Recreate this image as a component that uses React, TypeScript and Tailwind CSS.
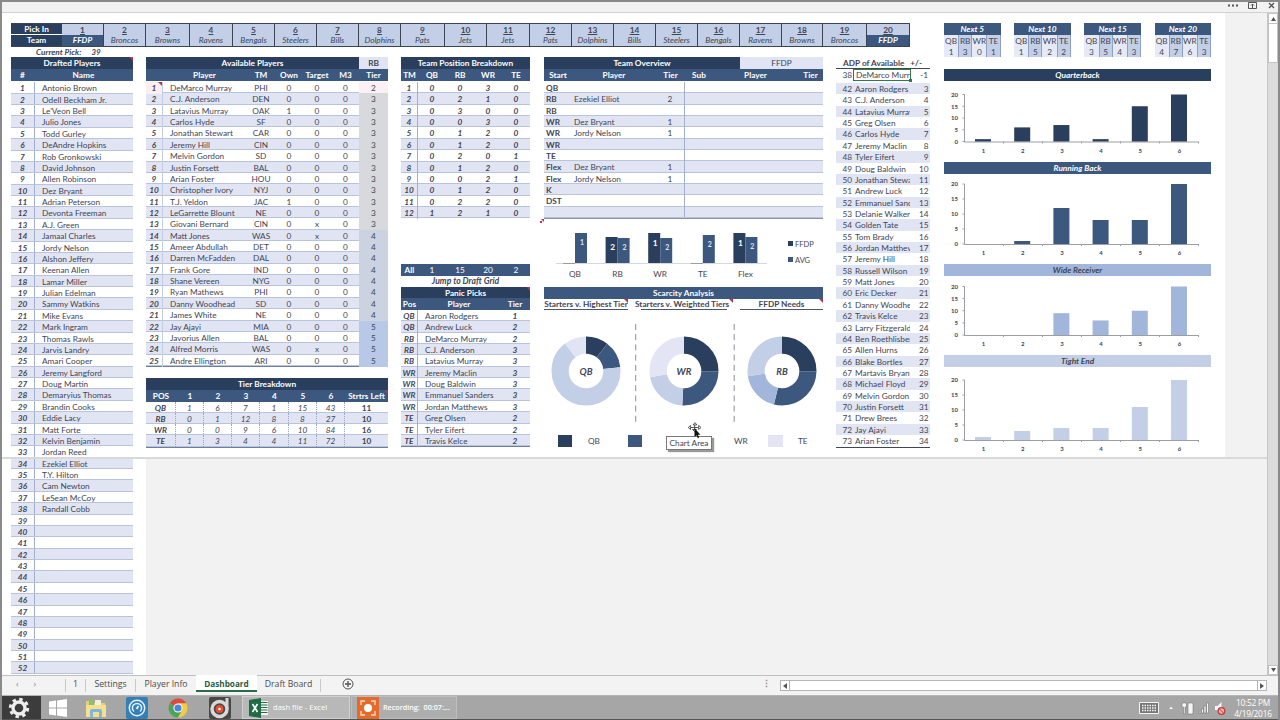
import { Fragment } from 'react'

const picks = [
  ['FFDP', 'w-[42px]'], ['Broncos', 'w-[42px]'], ['Browns', 'w-[44px]'], ['Ravens', 'w-[43px]'],
  ['Bengals', 'w-[42px]'], ['Steelers', 'w-[42px]'], ['Bills', 'w-[42px]'], ['Dolphins', 'w-[42px]'],
  ['Pats', 'w-[44px]'], ['Jets', 'w-[42px]'], ['Jets', 'w-[43px]'], ['Pats', 'w-[42px]'],
  ['Dolphins', 'w-[42px]'], ['Bills', 'w-[42px]'], ['Steelers', 'w-[42px]'], ['Bengals', 'w-[42px]'],
  ['Ravens', 'w-[42px]'], ['Browns', 'w-[41px]'], ['Broncos', 'w-[44px]'], ['FFDP', 'w-[43px]'],
]

const next = [
  { title: 'Next 5', values: [1, 3, 0, 1] },
  { title: 'Next 10', values: [1, 5, 2, 2] },
  { title: 'Next 15', values: [3, 5, 4, 3] },
  { title: 'Next 20', values: [4, 7, 6, 3] },
]

const drafted = [
  'Antonio Brown', 'Odell Beckham Jr.', "Le'Veon Bell", 'Julio Jones', 'Todd Gurley', 'DeAndre Hopkins',
  'Rob Gronkowski', 'David Johnson', 'Allen Robinson', 'Dez Bryant', 'Adrian Peterson', 'Devonta Freeman',
  'A.J. Green', 'Jamaal Charles', 'Jordy Nelson', 'Alshon Jeffery', 'Keenan Allen', 'Lamar Miller',
  'Julian Edelman', 'Sammy Watkins', 'Mike Evans', 'Mark Ingram', 'Thomas Rawls', 'Jarvis Landry',
  'Amari Cooper', 'Jeremy Langford', 'Doug Martin', 'Demaryius Thomas', 'Brandin Cooks', 'Eddie Lacy',
  'Matt Forte', 'Kelvin Benjamin', 'Jordan Reed', 'Ezekiel Elliot', 'T.Y. Hilton', 'Cam Newton',
  'LeSean McCoy', 'Randall Cobb',
]

const available: [string, string, string, string, number][] = [
  ['DeMarco Murray', 'PHI', '0', '0', 2],
  ['C.J. Anderson', 'DEN', '0', '0', 3],
  ['Latavius Murray', 'OAK', '1', '0', 3],
  ['Carlos Hyde', 'SF', '0', '0', 3],
  ['Jonathan Stewart', 'CAR', '0', '0', 3],
  ['Jeremy Hill', 'CIN', '0', '0', 3],
  ['Melvin Gordon', 'SD', '0', '0', 3],
  ['Justin Forsett', 'BAL', '0', '0', 3],
  ['Arian Foster', 'HOU', '0', '0', 3],
  ['Christopher Ivory', 'NYJ', '0', '0', 3],
  ['T.J. Yeldon', 'JAC', '1', '0', 3],
  ['LeGarrette Blount', 'NE', '0', '0', 3],
  ['Giovani Bernard', 'CIN', '0', 'x', 3],
  ['Matt Jones', 'WAS', '0', 'x', 4],
  ['Ameer Abdullah', 'DET', '0', '0', 4],
  ['Darren McFadden', 'DAL', '0', '0', 4],
  ['Frank Gore', 'IND', '0', '0', 4],
  ['Shane Vereen', 'NYG', '0', '0', 4],
  ['Ryan Mathews', 'PHI', '0', '0', 4],
  ['Danny Woodhead', 'SD', '0', '0', 4],
  ['James White', 'NE', '0', '0', 4],
  ['Jay Ajayi', 'MIA', '0', '0', 5],
  ['Javorius Allen', 'BAL', '0', '0', 5],
  ['Alfred Morris', 'WAS', '0', 'x', 5],
  ['Andre Ellington', 'ARI', '0', '0', 5],
]

const tierColor: Record<number, string> = {
  2: 'bg-[#fbf1f4]',
  3: 'bg-[#d8d9dc]',
  4: 'bg-[#cbd3e1]',
  5: 'bg-[#b7c9e6]',
}

const breakdown: [string, number[], number][] = [
  ['QB', [1, 6, 7, 1, 15, 43], 11],
  ['RB', [0, 1, 12, 8, 8, 27], 10],
  ['WR', [0, 0, 9, 6, 10, 84], 16],
  ['TE', [1, 3, 4, 4, 11, 72], 10],
]

const teamPositions = [
  [0, 0, 3, 0], [0, 2, 1, 0], [0, 3, 0, 0], [0, 0, 3, 0], [0, 1, 2, 0], [0, 1, 2, 0],
  [0, 2, 0, 1], [0, 1, 2, 0], [0, 0, 2, 1], [0, 1, 2, 0], [0, 2, 2, 0], [1, 2, 1, 0],
]

const panic = [
  ['QB', 'Aaron Rodgers', '1'], ['QB', 'Andrew Luck', '2'], ['RB', 'DeMarco Murray', '2'],
  ['RB', 'C.J. Anderson', '3'], ['RB', 'Latavius Murray', '3'], ['WR', 'Jeremy Maclin', '3'],
  ['WR', 'Doug Baldwin', '3'], ['WR', 'Emmanuel Sanders', '3'], ['WR', 'Jordan Matthews', '3'],
  ['TE', 'Greg Olsen', '2'], ['TE', 'Tyler Eifert', '2'], ['TE', 'Travis Kelce', '2'],
]

const overview = [
  ['QB', '', ''], ['RB', 'Ezekiel Elliot', '2'], ['RB', '', ''], ['WR', 'Dez Bryant', '1'],
  ['WR', 'Jordy Nelson', '1'], ['WR', '', ''], ['TE', '', ''], ['Flex', 'Dez Bryant', '1'],
  ['Flex', 'Jordy Nelson', '1'], ['K', '', ''], ['DST', '', ''], ['', '', ''],
]

const adp = [
  'Aaron Rodgers', 'C.J. Anderson', 'Latavius Murray', 'Greg Olsen', 'Carlos Hyde', 'Jeremy Maclin',
  'Tyler Eifert', 'Doug Baldwin', 'Jonathan Stewart', 'Andrew Luck', 'Emmanuel Sanders', 'Delanie Walker',
  'Golden Tate', 'Tom Brady', 'Jordan Matthews', 'Jeremy Hill', 'Russell Wilson', 'Matt Jones',
  'Eric Decker', 'Danny Woodhead', 'Travis Kelce', 'Larry Fitzgerald', 'Ben Roethlisberger', 'Allen Hurns',
  'Blake Bortles', 'Martavis Bryant', 'Michael Floyd', 'Melvin Gordon', 'Justin Forsett', 'Drew Brees',
  'Jay Ajayi', 'Arian Foster',
]

const stripe = (i: number) => (i % 2 ? 'bg-[#e1e5f3]' : 'bg-white')

function Note() {
  return <span className="absolute top-0 right-0 size-[4px] bg-[#c0304a] [clip-path:polygon(0_0,100%_0,100%_100%)]" />
}

function PickStrip() {
  return (
    <div className="w-[899px] shrink-0">
      <div className="flex h-[24px] border-y border-[#3b4453]">
        <div className="w-[51px] bg-[#2a3f5d] text-center font-bold text-white">
          <div className="h-[11px] border-b border-white leading-[11px]">Pick In</div>
          <div className="h-[11px] leading-[11px]">Team</div>
        </div>
        {picks.map(([team, width], i) => (
          <div key={i} className={`${width} border-r border-[#3b4453] bg-[#c2cfe7] text-center`}>
            <div className="h-[11px] font-bold leading-[12px] underline">{i + 1}</div>
            <div className={`h-[11px] leading-[11px] italic ${team === 'FFDP' ? 'bg-[#3d587e] font-bold text-white' : ''}`}>{team}</div>
          </div>
        ))}
      </div>
      <div className="flex h-[10px] gap-[10px] pl-[25px] font-bold leading-[11px] italic">
        <span>Current Pick:</span>
        <span>39</span>
      </div>
    </div>
  )
}

function NextPicks() {
  return (
    <div className="flex h-[34px] gap-[13.6px]">
      {next.map((n) => (
        <div key={n.title} className="w-[56.6px]">
          <div className="h-[12px] bg-[#3d587e] text-center font-bold leading-[13px] text-white italic">{n.title}</div>
          <div className="grid h-[22px] grid-cols-4 text-center">
            {['QB', 'RB', 'WR', 'TE'].map((pos, i) => (
              <div key={pos} className={i % 2 ? 'border-x border-[#8ea1c4] bg-[#c2cfe7]' : 'bg-[#e6eaf6]'}>
                <div className="flex h-[11px] justify-center leading-[12px]">{pos}</div>
                <div className="h-[11px] leading-[12px]">{n.values[i]}</div>
              </div>
            ))}
          </div>
        </div>
      ))}
    </div>
  )
}

function DraftedPlayers() {
  return (
    <div className="ml-[9px] w-[122px]">
      <div className="relative h-[12px] bg-[#2a3f5d] text-center font-bold leading-[13px] text-white">
        Drafted Players
        <Note />
      </div>
      <div className="mb-[1.3px] grid h-[12px] grid-cols-[23px_99px] bg-[#3d587e] text-center font-bold leading-[13px] text-white">
        <span>#</span>
        <span>Name</span>
      </div>
      {Array.from({ length: 52 }, (_, i) => (
        <div key={i} className={`flex h-[11.385px] border-b border-[#b9c3dc] leading-[12px] ${stripe(i)}`}>
          <div className="w-[24px] border-r border-[#a3b0cd] text-center font-bold italic">{i + 1}</div>
          <div className="pl-[7px]">{drafted[i]}</div>
        </div>
      ))}
    </div>
  )
}

function AvailablePlayers() {
  return (
    <div className="w-[242px]">
      <div className="flex h-[12px] text-center font-bold leading-[13px]">
        <div className="w-[213px] bg-[#2a3f5d] text-white">Available Players</div>
        <div className="w-[29px] bg-[#e1e5f3]">RB</div>
      </div>
      <div className="mb-px grid h-[12px] grid-cols-[17px_83px_30px_26px_30px_27px_29px] bg-[#3d587e] text-center font-bold leading-[13px] text-white">
        <span />
        {['Player', 'TM', 'Own', 'Target', 'M3', 'Tier'].map((h) => <span key={h}>{h}</span>)}
      </div>
      <div className="border-b border-[#6d7f9f]">
        {available.map(([name, tm, own, target, tier], i) => (
          <div key={name} className={`grid h-[11.37px] grid-cols-[17px_83px_30px_26px_30px_27px_29px] border-b border-[#b9c3dc] text-center leading-[12px] ${stripe(i)}`}>
            <span className={`relative border-r border-[#c5cde2] font-bold italic ${i ? '' : 'bg-[#fbeef2]'}`}>
              {i + 1}
              {i === 0 && <Note />}
            </span>
            <span className="pl-[7px] text-left">{name}</span>
            <span>{tm}</span>
            <span>{own}</span>
            <span>{target}</span>
            <span>0</span>
            <span className={tierColor[tier]}>{tier}</span>
          </div>
        ))}
      </div>
    </div>
  )
}

function TierBreakdown() {
  return (
    <div className="mt-[10.6px] w-[242px]">
      <div className="h-[12px] bg-[#2a3f5d] text-center font-bold leading-[13px] text-white">Tier Breakdown</div>
      <div className="relative grid h-[12px] grid-cols-[30px_28px_28px_28px_29px_28px_28px_43px] bg-[#3d587e] text-center font-bold leading-[13px] text-white">
        {['POS', '1', '2', '3', '4', '5', '6'].map((h) => <span key={h}>{h}</span>)}
        <span className="whitespace-nowrap">Strtrs Left</span>
        <Note />
      </div>
      <div className="border-b border-[#6d7f9f]">
        {breakdown.map(([pos, values, left], i) => (
          <div key={pos} className={`grid h-[11.3px] grid-cols-[30px_28px_28px_28px_29px_28px_28px_43px] border-b border-[#b9c3dc] text-center leading-[12px] ${stripe(i)}`}>
            <span className="border-r border-dotted border-[#9aa7c2] font-bold italic">{pos}</span>
            {values.map((v, j) => <span key={j} className="border-r border-dotted border-[#9aa7c2] italic">{v}</span>)}
            <span className="font-bold">{left}</span>
          </div>
        ))}
      </div>
    </div>
  )
}

function TeamPositions() {
  return (
    <div className="w-[129px]">
      <div className="h-[12px] bg-[#2a3f5d] text-center font-bold leading-[13px] text-white">Team Position Breakdown</div>
      <div className="mb-px grid h-[12px] grid-cols-[17px_repeat(4,28px)] bg-[#3d587e] text-center font-bold leading-[13px] text-white">
        {['TM', 'QB', 'RB', 'WR', 'TE'].map((h) => <span key={h}>{h}</span>)}
      </div>
      {teamPositions.map((row, i) => (
        <div key={i} className={`grid h-[11.37px] grid-cols-[17px_repeat(4,28px)] border-b border-[#b9c3dc] text-center font-bold leading-[12px] italic ${stripe(i)}`}>
          <span className="border-r border-[#a3b0cd]">{i + 1}</span>
          {row.map((v, j) => <span key={j}>{v}</span>)}
        </div>
      ))}
      <div className="mt-[45.5px] grid h-[12px] grid-cols-[17px_repeat(4,28px)] bg-[#3d587e] text-center leading-[12px] text-white">
        <span className="font-bold">All</span>
        <span>1</span>
        <span>15</span>
        <span>20</span>
        <span>2</span>
      </div>
      <div className="h-[11px] text-center text-[8.6px] font-bold leading-[11px] italic">Jump to Draft Grid</div>
    </div>
  )
}

function PanicPicks() {
  return (
    <div className="w-[129px]">
      <div className="relative h-[11px] bg-[#2a3f5d] text-center font-bold leading-[12px] text-white">
        Panic Picks
        <Note />
      </div>
      <div className="grid h-[12px] grid-cols-[17px_82px_30px] bg-[#3d587e] text-center font-bold leading-[12px] text-white">
        <span>Pos</span>
        <span>Player</span>
        <span>Tier</span>
      </div>
      <div className="border-b border-[#6d7f9f]">
        {panic.map(([pos, name, tier], i) => (
          <div key={name} className={`grid h-[11.38px] grid-cols-[17px_82px_30px] border-b border-[#b9c3dc] leading-[12px] ${stripe(i)}`}>
            <span className="border-r border-[#a3b0cd] text-center font-bold italic">{pos}</span>
            <span className="pl-[7px]">{name}</span>
            <span className="text-center font-bold italic">{tier}</span>
          </div>
        ))}
      </div>
    </div>
  )
}

function TeamOverview() {
  return (
    <div className="w-[279px]">
      <div className="flex h-[12px] text-center font-bold leading-[13px]">
        <div className="w-[196px] bg-[#2a3f5d] text-white">Team Overview</div>
        <div className="w-[83px] bg-[#e1e5f3] font-normal">FFDP</div>
      </div>
      <div className="mb-px grid h-[12px] grid-cols-[28px_84px_29px_28px_85px_25px] bg-[#3d587e] text-center font-bold leading-[13px] text-white">
        {['Start', 'Player', 'Tier', 'Sub', 'Player', 'Tier'].map((h, i) => <span key={i}>{h}</span>)}
      </div>
      <div className="border-b border-[#8b93a3]">
        {overview.map(([pos, name, tier], i) => (
          <div key={i} className={`grid h-[11.33px] grid-cols-[28px_84px_29px_138px] border-b border-[#b9c3dc] leading-[12px] ${stripe(i)}`}>
            <span className="pl-[2px] font-bold">{pos}</span>
            <span className="pl-[2px]">{name}</span>
            <span className="border-r border-[#a3b0cd] text-center">{tier}</span>
            <span />
          </div>
        ))}
      </div>
    </div>
  )
}

const groups: [string, number, number, string][] = [
  ['QB', 0, 30, '1'],
  ['RB', 26, 25, '2'],
  ['WR', 30, 25, '2'],
  ['TE', 0, 28, '2'],
  ['Flex', 30, 26, '2'],
]

function TeamChart() {
  return (
    <svg width="283" height="68" className="-ml-1 block" fill="#3f4654">
      <path d="M1 0h3v3zM0 2h2v2H0z" fill="#c0304a" />
      <path d="M16 44.5H227" stroke="#d5d7dc" />
      {groups.map(([label, a, b, avg], i) => {
        const x = 35 + i * 42.6
        return (
          <g key={label} textAnchor="middle">
            {a > 0 ? <rect x={x - 12} y={44 - a} width="12" height={a} fill="#2a3f5d" /> : <rect x={x - 12} y="44" width="12" height="1" fill="#9a9da3" />}
            <rect x={x} y={44 - b} width="12" height={b} fill="#3d587e" />
            {a > 0 && <text x={x - 5} y={57 - a} fontWeight="700" fill="#fff">{a > 28 ? 1 : 2}</text>}
            <text x={x + 7} y={56 - b} fontSize="7" fontWeight="700" fill="#dfe6f2">{avg}</text>
            <text x={x} y="58">{label}</text>
          </g>
        )
      })}
      <rect x="248" y="22" width="5" height="5" fill="#2a3f5d" />
      <text x="255" y="28" fontSize="7.500">FFDP</text>
      <rect x="248" y="38" width="5" height="5" fill="#3d587e" />
      <text x="255" y="44" fontSize="7.500">AVG</text>
    </svg>
  )
}

function Donut({ cx, label, slices }: { cx: number; label: string; slices: [number, string][] }) {
  const r = 25.9
  const c = 2 * Math.PI * r
  let at = 0
  return (
    <g>
      {slices.map(([part, color], i) => {
        const start = at
        at += part
        return (
          <circle
            key={i}
            cx={cx}
            cy="61"
            r={r}
            fill="none"
            stroke={color}
            strokeWidth="17.2"
            strokeDasharray={`${part * c} ${c}`}
            strokeDashoffset={-start * c}
            transform={`rotate(-90 ${cx} 61)`}
          />
        )
      })}
      <text x={cx} y="64.500" fontSize="9.500" fontWeight="700" fontStyle="italic" textAnchor="middle">{label}</text>
    </g>
  )
}

function ScarcityAnalysis() {
  return (
    <div className="relative w-[279px]">
      <div className="h-[12px] bg-[#3d587e] text-center font-bold leading-[13px] text-white">Scarcity Analysis</div>
      <div className="flex h-[11px] justify-between text-center font-bold leading-[11px] whitespace-nowrap">
        <div className="relative flex w-[84px] justify-center border-b border-[#4c566b]">Starters v. Highest Tier<Note /></div>
        <div className="relative flex w-[98px] justify-center">
          <span className="w-[86px] border-b border-[#4c566b] text-center"><span className="-ml-[6px]">Starters v. Weighted Tiers</span></span>
          <Note />
        </div>
        <div className="relative flex w-[83px] justify-center border-b border-[#4c566b]">FFDP Needs<Note /></div>
      </div>
      <svg width="279" height="137" className="block" fill="#3f4654">
        <path d="M91.7 14V112M190.2 14V112" stroke="#8b8e95" strokeDasharray="6 4.2" />
        <Donut cx={42} label="QB" slices={[[0.105, '#2a3f5d'], [0.125, '#3d587e'], [0.66, '#c2cfe7'], [0.11, '#e1e5f3']]} />
        <Donut cx={140} label="WR" slices={[[0.25, '#2a3f5d'], [0.255, '#3d587e'], [0.21, '#c2cfe7'], [0.285, '#e4e5f4']]} />
        <Donut cx={238} label="RB" slices={[[0.25, '#2a3f5d'], [0.285, '#3d587e'], [0.185, '#a1b6da'], [0.28, '#c2cfe7']]} />
        <rect x="14" y="125" width="14" height="12" fill="#2a3f5d" />
        <rect x="84" y="125" width="14" height="12" fill="#3d587e" />
        <rect x="224" y="125" width="15" height="12" fill="#e4e5f4" />
        <text x="44" y="134">QB</text>
        <text x="190" y="134">WR</text>
        <text x="254" y="134">TE</text>
      </svg>
      <div className="absolute top-[149px] left-[122px] h-[14px] w-[46px] border border-[#77797d] bg-white text-center leading-[12px] shadow-[2px_2px_1px_#999]">Chart Area</div>
      <svg className="absolute top-[135px] left-[143px]" width="16" height="17" viewBox="0 0 16 17">
        <g fill="#fff" stroke="#333" strokeWidth=".8">
          <path d="M8 .7l2 2.2H6zM1.2 5.5l2.4-2v4zM14 5.5l-2.4-2v4zM5.5 7.5l2 2 2-2z" />
          <path d="M7.7 3v5M4 5.5h7" />
        </g>
        <path d="M7.500 6v9l2-1.800 1.400 3 1.300-.600-1.400-2.800h2.600z" fill="#111" />
      </svg>
    </div>
  )
}

function AdpList() {
  return (
    <div className="w-[94px]">
      <div className="flex h-[12px] justify-between border-b border-[#3f4654] pr-[8px] pl-[7px] font-bold leading-[12px]">
        <span>ADP of Available</span>
        <span>+/-</span>
      </div>
      <div className="mb-[2px] flex h-[12px] leading-[12px]">
        <span className="w-[17px] pr-px text-right">38</span>
        <span className="relative w-[58px] border border-[#2f7a4d] pl-[2px] leading-[10px]">
          <span className="block overflow-hidden whitespace-nowrap">DeMarco Murr</span>
          <span className="absolute -right-[2px] -bottom-[2px] size-[3px] bg-[#2f7a4d]" />
        </span>
        <span className="w-[17px] text-right">-1</span>
      </div>
      <div className="border-b border-[#3f4654]">
        {adp.map((name, i) => (
          <div key={name} className={`flex h-[11.37px] leading-[12px] ${stripe(i + 1)}`}>
            <span className="w-[16px] text-right">{42 + i}</span>
            <span className="ml-[3px] w-[55px] overflow-hidden whitespace-nowrap">{name}</span>
            <span className="w-[18.500px] text-right">{3 + i}</span>
          </div>
        ))}
      </div>
    </div>
  )
}

type TierChartProps = { title: string; head: string; color: string; values: number[]; height: number; top: number; base: number }

function TierChart({ title, head, color, values, height, top, base }: TierChartProps) {
  const unit = (base - top) / 20
  return (
    <div className="w-[267px]">
      <div className={`h-[12px] text-center font-bold leading-[13px] italic ${head}`}>{title}</div>
      <svg width="267" height={height} className="block" fontSize="6" fontWeight="700" fill="#3f4654">
        <path d={`M20.500 ${top}V${base + 0.5}H254.500`} fill="none" stroke="#9b9ea5" />
        {[0, 5, 10, 15, 20].map((v) => (
          <Fragment key={v}>
            <path d={`M18.500 ${base - v * unit}h2`} stroke="#9b9ea5" />
            <text x="14" y={base - v * unit + 2.3} textAnchor="end">{v}</text>
          </Fragment>
        ))}
        {values.map((v, i) => (
          <Fragment key={i}>
            <rect x={31 + i * 39.2} y={base - v * unit} width="16" height={v * unit} fill={color} />
            <path d={`M${59.500 + i * 39} ${base}v2`} stroke="#9b9ea5" />
            <text x={39.500 + i * 39.2} y={base + 11} textAnchor="middle">{i + 1}</text>
          </Fragment>
        ))}
      </svg>
    </div>
  )
}

function SheetTabs() {
  return (
    <div className="flex h-[20px] items-stretch border-t border-[#bfbfbf] bg-[#f3f3f3] font-['Open_Sans',sans-serif] text-[8.700px] leading-[16px] text-[#4a4a4a]">
      <div className="flex w-[63px] gap-[15px] pl-[14px] text-[#8c8c8c]">
        <span>‹</span>
        <span>›</span>
      </div>
      <div className="my-[3px] w-[21px] border-x border-[#c8c8c8] text-center leading-[11px]">1</div>
      <div className="w-[49px] text-center">Settings</div>
      <div className="my-[3px] w-px bg-[#c8c8c8]" />
      <div className="w-[60px] text-center">Player Info</div>
      <div className="-mt-px h-[17px] w-[61px] border-b-2 border-[#2c6b4a] bg-white text-center text-[8.200px] font-bold leading-[18px] text-[#275f43]">Dashboard</div>
      <div className="w-[63px] text-center">Draft Board</div>
      <div className="my-[3px] w-px bg-[#c8c8c8]" />
      <svg width="12" height="12" viewBox="0 0 12 12" className="mt-[2px] ml-[21px]" fill="none" stroke="#555">
        <circle cx="6" cy="6" r="5" />
        <path d="M6 3v6M3 6h6" strokeWidth="1.300" />
      </svg>
      <div className="ml-auto pr-[9px] font-bold text-[#8c8c8c]">⋮</div>
      <div className="mt-[4px] mr-[11px] flex h-[11px] w-[487px] items-center justify-between border border-[#b5b5b5] bg-white text-[#555]">
        <div className="flex h-full w-[9px] items-center justify-center border-r border-[#b5b5b5]">
          <svg width="4" height="6"><path d="M4 0v6L0 3z" fill="#555" /></svg>
        </div>
        <div className="flex h-full w-[9px] items-center justify-center border-l border-[#b5b5b5]">
          <svg width="4" height="6"><path d="M0 0v6l4-3z" fill="#555" /></svg>
        </div>
      </div>
    </div>
  )
}

function Taskbar() {
  return (
    <div className="flex h-[25px] items-center border-t border-b border-t-[#b5b5b5] border-b-[#555] bg-[#a6a6a6] font-['Open_Sans',sans-serif] text-[7.600px] text-white">
      <div className="-ml-[2px] flex h-full w-[41px] items-center justify-center bg-[#3c3c3c] pr-[3px]">
        <svg width="22" height="22" viewBox="-11 -11 22 22" fill="none" stroke="#eee">
          <circle r="6" strokeWidth="3.400" />
          <circle r="8.700" strokeWidth="3" strokeDasharray="3.400 3.430" />
        </svg>
      </div>
      <svg width="18" height="18" viewBox="0 0 18 18" className="ml-[8px]" fill="#fff">
        <path d="M0 2.600L7 1.500v7H0zM8 1.400L18 0v8.500H8zM0 9.500h7v7l-7-1zM8 9.500h10V18L8 16.600z" />
      </svg>
      <svg width="22" height="20" viewBox="0 0 22 20" className="ml-[18px]">
        <path d="M1 3h7l1 2h11v13H1z" fill="#e8cf73" />
        <path d="M4 1h5v6H4z" fill="#8cbf6b" />
        <path d="M10 2h6v5h-6z" fill="#f4efd9" />
        <path d="M1 7h20v12H1z" fill="#f4e08f" />
        <path d="M5 19v-6q0-2 2-2h8q2 0 2 2v6h-3v-5H8v5z" fill="#7eb6dc" />
      </svg>
      <svg width="22" height="22" viewBox="0 0 22 22" className="ml-[19px]" fill="none" stroke="#e4f1fa">
        <rect width="22" height="22" rx="2" fill="#337fb8" stroke="none" />
        <circle cx="11" cy="11" r="7.700" strokeWidth="1.500" />
        <path d="M8 14.500a4.600 4.600 0 1 1 6 0" strokeWidth="1.500" />
        <path d="M10.500 12l2-3" strokeWidth="2" />
      </svg>
      <svg width="20" height="20" viewBox="-10 -10 20 20" className="ml-[20px]">
        <path d="M0 0L-8.200-4.700A9.500 9.500 0 0 1 8.200-4.700z" fill="#dd4b3e" />
        <path d="M0 0L-8.200-4.700A9.500 9.500 0 0 0 0 9.500L4.100 2.400z" fill="#4aa45a" />
        <path d="M0-4.700H8.200A9.500 9.500 0 0 1 0 9.500L4.100 2.400z" fill="#f4cc42" />
        <circle r="4.600" fill="#fff" />
        <circle r="3.600" fill="#4a86e0" />
      </svg>
      <svg width="22" height="22" viewBox="0 0 22 22" className="ml-[21px]" fill="none">
        <rect width="22" height="22" rx="2" fill="#4a4747" />
        <circle cx="10.500" cy="12" r="7.500" stroke="#d8d8d8" strokeWidth="3.500" />
        <path d="M18 1v11" stroke="#d8d8d8" strokeWidth="3" />
        <circle cx="10.500" cy="12" r="4" fill="#e2502f" />
        <circle cx="10.500" cy="12" r="1.300" fill="#fff" />
      </svg>
      <div className="ml-[11px] flex h-full w-[108px] items-center gap-[4px] border border-[#d0d0d0] bg-[#b8b8b8] pl-[6px]">
        <svg width="20" height="20" viewBox="0 0 20 20">
          <path d="M11 3h8v14h-8z" fill="#f2f6f3" />
          <path d="M12 4.500h6.500M12 7h6.500M12 9.500h6.500M12 12h6.500M12 14.500h6.500" stroke="#2c6b4a" />
          <path d="M0 2l12-2v20L0 18z" fill="#1f6b43" />
          <path d="M3.500 6l5 8M8.500 6l-5 8" stroke="#fff" strokeWidth="1.700" />
        </svg>
        <span>dash file - Excel</span>
      </div>
      <div className="ml-px flex h-full w-[106px] items-center gap-[4px] border border-[#bdbdbd] bg-[#aeaeae] pl-[5px]">
        <svg width="22" height="22" viewBox="0 0 22 22">
          <rect width="22" height="22" fill="#e36c2c" />
          <path d="M4 8V4h4M14 4h4v4M18 14v4h-4M8 18H4v-4" fill="none" stroke="#f9d9c4" strokeWidth="1.300" />
          <circle cx="11" cy="11" r="4" fill="#fff" />
        </svg>
        <span className="text-[7.200px] font-semibold whitespace-nowrap">Recording:&nbsp; 00:07:...</span>
      </div>
      <div className="ml-auto flex items-center pr-[6px]">
        <svg width="90" height="16" viewBox="0 0 90 16" fill="#f5f5f5">
          <path d="M1.500 2.500h19v11h-19z" fill="#777" stroke="#f5f5f5" />
          <path d="M4 5.500h14M4 8h14M4 10.500h14" stroke="#f5f5f5" strokeDasharray="1.500 1" strokeWidth="1.300" />
          <path d="M31 9l2-2.500L35 9z" />
          <path d="M44 3h4.500v4H47v7h-1.500V7H44zM50 3h5v11h-5z" stroke="#666" strokeWidth=".5" />
          <path d="M61 13h2v-2h-2zM63.500 13h2V9h-2zM66 13h2V6h-2zM68.500 13h2V3h-2z" stroke="#666" strokeWidth=".5" />
          <path d="M77 6h2.500l4-4v12l-4-4H77z" />
          <circle cx="83.500" cy="11" r="3.300" fill="#e9b5b5" stroke="#c33c3c" strokeWidth="1.300" />
          <path d="M81.300 8.800l4.400 4.400" stroke="#c33c3c" />
        </svg>
        <div className="ml-[6px] w-[38px] text-center text-[8.300px] leading-[11px] tracking-tight">
          <div>10:52 PM</div>
          <div>4/19/2016</div>
        </div>
      </div>
    </div>
  )
}

export default function App() {
  return (
    <div className="flex h-[720px] w-[1280px] flex-col overflow-hidden border-t-2 border-r-2 border-l-2 border-[#8a8a8a] bg-[#f2f2f2] font-['Lato',sans-serif] text-[8.250px] text-[#3f4654]">
      {/* Window bar */}
      <div className="flex h-[11px] shrink-0 justify-end border-b border-[#d0d0d0]">
        <svg width="57" height="10" viewBox="0 0 57 10" fill="none" stroke="#555">
          <path d="M7 3.500h10" strokeWidth="2" strokeDasharray="2 2" />
          <path d="M27.500.5h8v6h-8zM31.500 6V2M30 3.500L31.500 2l1.500 1.500" />
          <path d="M48 1l5 5M53 1l-5 5" strokeWidth="1.300" />
        </svg>
      </div>

      {/* Worksheet */}
      <div className="relative flex min-h-0 flex-1">
        <div className="w-[1265px] overflow-hidden">
          <div className="flex h-[44px] w-[1223px] gap-[34px] bg-white pt-[10px] pl-[9px]">
            <PickStrip />
            <NextPicks />
          </div>
          <div className="flex">
            <div className="h-[620px] w-[144px] shrink-0 bg-white">
              <DraftedPlayers />
            </div>
            <div className="flex h-[401px] w-[1079px] bg-white">
              <div className="mr-[13px]">
                <AvailablePlayers />
                <TierBreakdown />
              </div>
              <div className="mr-[14px]">
                <TeamPositions />
                <PanicPicks />
              </div>
              <div className="mr-[13px]">
                <TeamOverview />
                <TeamChart />
                <ScarcityAnalysis />
              </div>
              <AdpList />
              <div className="ml-[14px] pt-[12px]">
                <TierChart title="Quarterback" head="bg-[#2a3f5d] text-white" color="#2a3f5d" values={[1, 6, 7, 1, 15, 20]} height={81} top={13.5} base={60.5} />
                <TierChart title="Running Back" head="bg-[#3d587e] text-white" color="#3d587e" values={[0, 1, 12, 8, 8, 20]} height={90} top={10} base={70} />
                <TierChart title="Wide Receiver" head="bg-[#a1b6da]" color="#a1b6da" values={[0, 0, 9, 6, 10, 20]} height={79} top={10.5} base={59} />
                <TierChart title="Tight End" head="bg-[#c2cfe7]" color="#c2cfe7" values={[1, 3, 4, 4, 11, 20]} height={90} top={13} base={73} />
              </div>
            </div>
          </div>
        </div>
        {/* Pane split */}
        <div className="absolute top-[444px] left-0 h-[2px] w-[1265px] bg-[#d9d9d9]" />
        <div className="flex w-[11px] flex-col justify-between border-l border-[#c6c6c6] bg-[#dcdcdc]">
          <div className="h-[50px] border border-[#c3c3c3] bg-white">
            <div className="flex h-[10px] items-center justify-center border-b border-[#c3c3c3]">
              <svg width="5" height="4"><path d="M0 4h5L2.500 0z" fill="#555" /></svg>
            </div>
          </div>
          <div className="flex h-[10px] items-center justify-center border border-[#c3c3c3] bg-white">
            <svg width="5" height="4"><path d="M0 0h5L2.500 4z" fill="#555" /></svg>
          </div>
        </div>
      </div>

      <SheetTabs />
      <Taskbar />
    </div>
  )
}
